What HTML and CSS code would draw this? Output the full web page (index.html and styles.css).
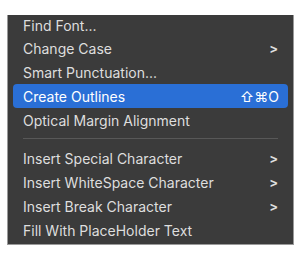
FILE: index.html
```html
<!DOCTYPE html>
<html lang="en">
<head>
  <meta charset="UTF-8">
  <title>Type Menu</title>
  <link rel="stylesheet" href="styles.css">
</head>
<body>
  <div class="menu">
    <div class="item">Find Font...</div>
    <div class="item">Change Case <span class="arrow">&gt;</span></div>
    <div class="item">Smart Punctuation...</div>
    <div class="item active">Create Outlines <span class="shortcut">⇧⌘O</span></div>
    <div class="item">Optical Margin Alignment</div>
    <div class="sep"></div>
    <div class="item">Insert Special Character <span class="arrow">&gt;</span></div>
    <div class="item">Insert WhiteSpace Character <span class="arrow">&gt;</span></div>
    <div class="item">Insert Break Character <span class="arrow">&gt;</span></div>
    <div class="item">Fill With PlaceHolder Text</div>
  </div>
</body>
</html>
```

FILE: styles.css
```css
body {
  margin: 0;
  background: #fff;
  font-family: Inter, "Liberation Sans", sans-serif;
}
.menu {
  margin: 15px 0 0 7px;
  width: 285px;
  padding: 0 0 2px;
  background-color: #3b3b3b;
  border: 1px solid #9a9a9a;
  border-top: none;
}
.item {
  box-sizing: border-box;
  display: flex;
  justify-content: space-between;
  align-items: center;
  height: 24px;
  margin: 0 5px;
  padding: 0 9px 0 10px;
  border-radius: 4px;
  color: #dedede;
  font-size: 14px;
}
.item:first-child {
  height: 21px;
  padding-bottom: 1px;
}
.item.active {
  background-color: #2a6fd6;
  color: #fff;
}
.arrow {
  font-weight: bold;
  font-size: 13px;
  padding-right: 1px;
}
.sep {
  height: 1px;
  margin: 6px 15px 7px;
  background-color: #585858;
}
```
